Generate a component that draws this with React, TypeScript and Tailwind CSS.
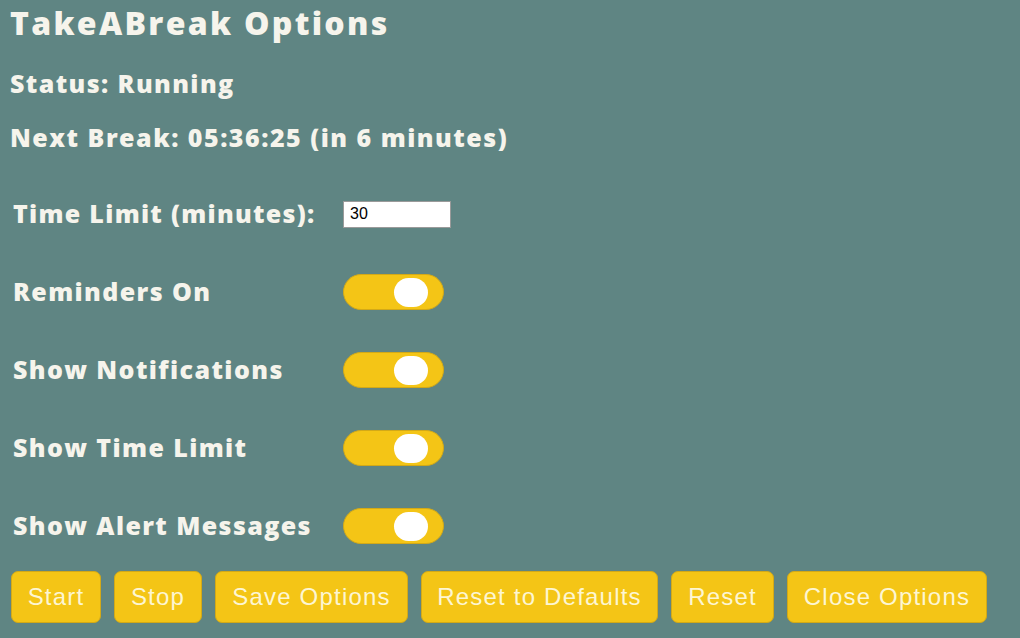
const toggles = ['Reminders On', 'Show Notifications', 'Show Time Limit', 'Show Alert Messages'];

const buttons = [
  { label: 'Start', w: 'w-[90px]' },
  { label: 'Stop', w: 'w-[88px]' },
  { label: 'Save Options', w: 'w-[193px]' },
  { label: 'Reset to Defaults', w: 'w-[237px]' },
  { label: 'Reset', w: 'w-[103px]' },
  { label: 'Close Options', w: 'w-[200px]' },
];

const Toggle = () => (
  <div className="relative w-[101px] h-[36px] rounded-full bg-[#f4c516] border border-[#d3a917]">
    <span className="absolute right-[15px] top-[3px] w-[34px] h-[29px] rounded-full bg-white" />
  </div>
);

export default function App() {
  return (
    <div className="w-[1020px] h-[638px] bg-[#5f8583] text-[#f6f4ec] font-['Open_Sans',sans-serif] font-extrabold overflow-hidden">
      <div className="pl-[10px] pt-[3px]">
        <h1 className="text-[32px] leading-[40px] tracking-[2.3px]">TakeABreak Options</h1>
        <p className="text-[25px] leading-[30px] mt-[25px] tracking-[1.4px]">Status: Running</p>
        <p className="text-[25px] leading-[30px] mt-[24px] tracking-[1.5px]">Next Break: 05:36:25 (in 6 minutes)</p>
      </div>

      {/* Options */}
      <div className="pl-[13px] mt-[44px] flex flex-col gap-[42px]">
        <div className="flex items-center h-[36px]">
          <label className="w-[330px] text-[25px] tracking-[1.3px]">Time Limit (minutes):</label>
          <input
            defaultValue="30"
            className="w-[108px] h-[27px] bg-white border border-[#9a9a9a] px-[6px] text-[16px] font-normal text-black font-['Liberation_Sans',sans-serif] outline-none"
          />
        </div>
        {toggles.map((label) => (
          <div key={label} className="flex items-center h-[36px]">
            <span className="w-[330px] text-[25px] tracking-[1.4px]">{label}</span>
            <Toggle />
          </div>
        ))}
      </div>

      {/* Actions */}
      <div className="pl-[11px] mt-[27px] flex gap-[13px]">
        {buttons.map((b) => (
          <button
            key={b.label}
            className={`${b.w} h-[52px] rounded-[7px] bg-[#f4c516] border border-[#d3a917] text-[#fdf6d2] text-[24px] tracking-[1.2px] font-normal font-['Liberation_Sans',sans-serif]`}
          >
            {b.label}
          </button>
        ))}
      </div>
    </div>
  );
}
